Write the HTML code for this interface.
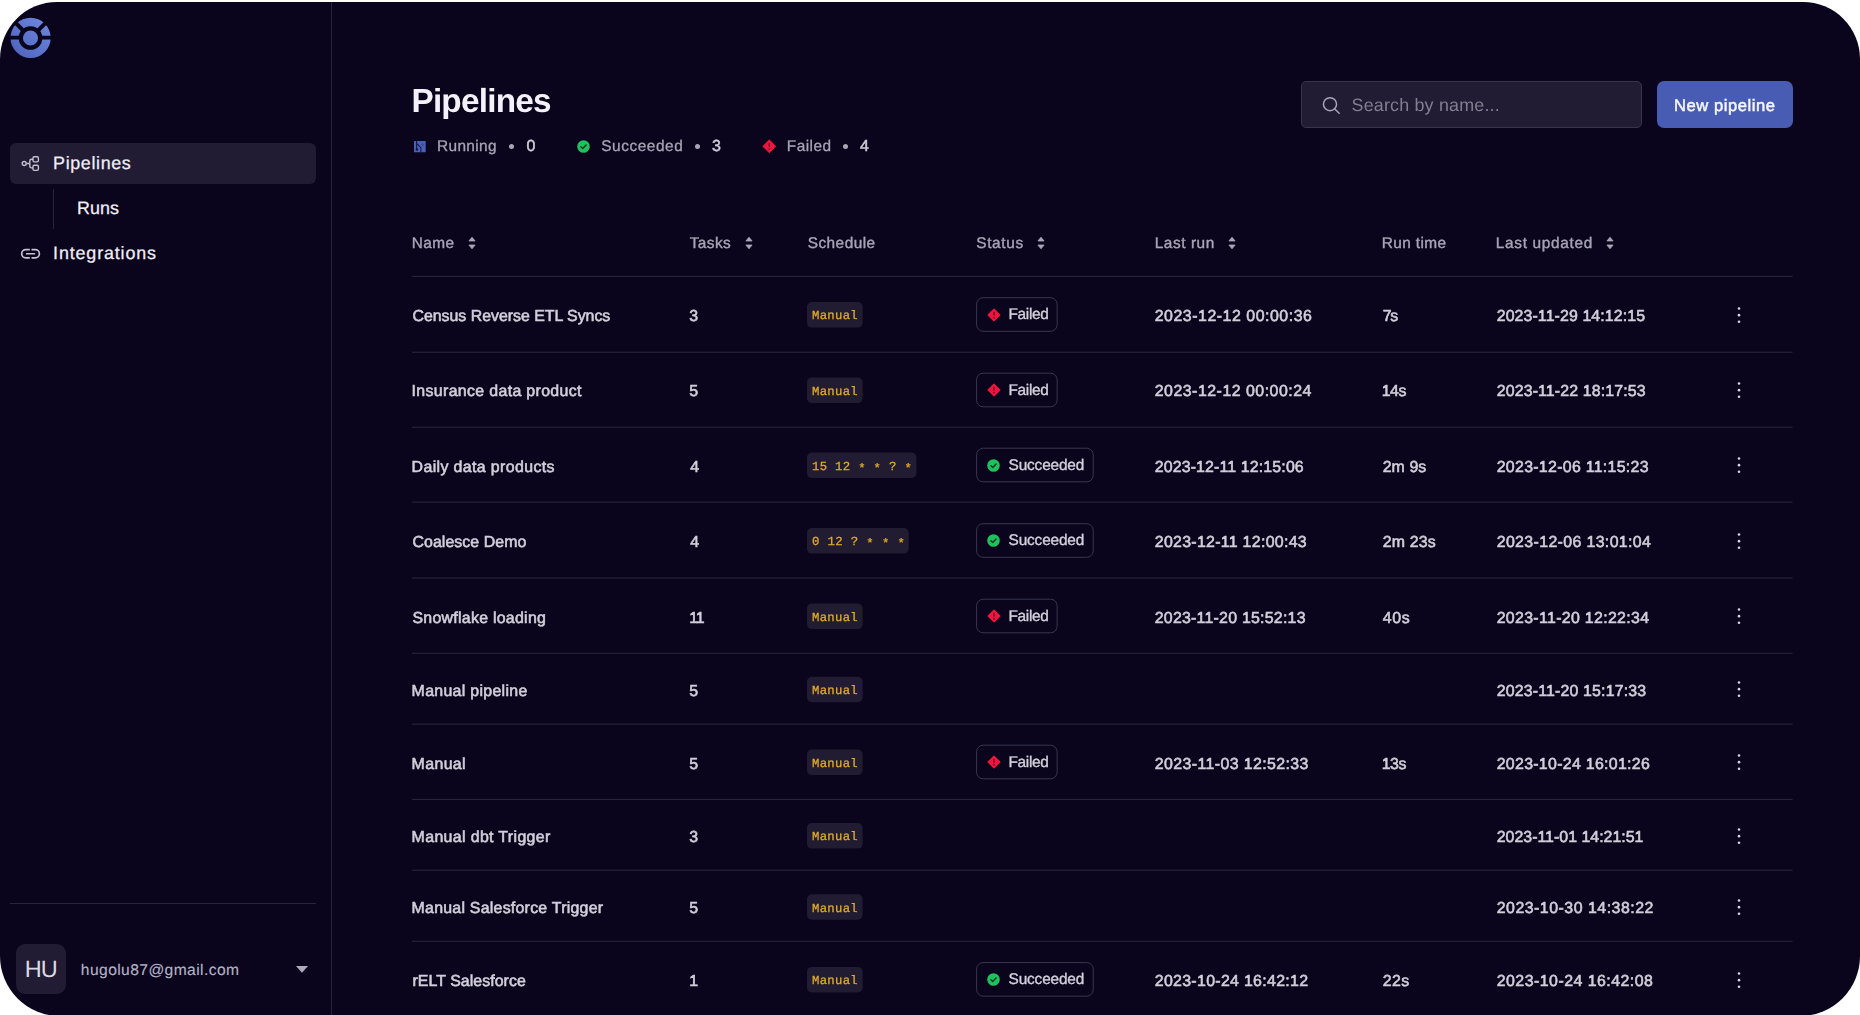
<!DOCTYPE html>
<html lang="en"><head><meta charset="utf-8"><title>Pipelines</title>
<style>
*{box-sizing:border-box;margin:0;padding:0}
html,body{width:1860px;height:1015px;overflow:hidden;background:#fff}
body{font-family:"Liberation Sans",sans-serif;color:#e8e6f0;position:relative;text-rendering:geometricPrecision}
.app{position:absolute;left:0;top:2px;width:1860px;height:1014px;background:#0a051c;border-radius:57px 57px 60px 60px;overflow:hidden}
.abs{position:absolute}
.ic{display:block}
.t{position:absolute;height:30px;line-height:30px;white-space:nowrap}
.chip{position:absolute;left:807px;height:25.6px;border-radius:5px;background:#221c33}
.badge{position:absolute;left:976px;height:34.5px;border:1px solid #37324c;border-radius:7px}
</style></head><body>
<div class="app">
<div class="abs" style="left:0;top:-2px;width:1860px;height:1015px">

<div class="abs" style="left:331px;top:0;width:1px;height:1015px;background:#2a243b"></div>
<svg class="abs" style="left:9px;top:17px" width="44" height="44" viewBox="0 0 44 44">
<defs><linearGradient id="lg" x1="1" y1="0" x2="0" y2="1"><stop offset="0" stop-color="#7189e2"/><stop offset="1" stop-color="#4b61b9"/></linearGradient><clipPath id="cl"><circle cx="21.6" cy="20.9" r="20.7"/></clipPath></defs>
<circle cx="21.6" cy="20.9" r="20.1" fill="url(#lg)"/>
<g clip-path="url(#cl)"><circle cx="21.5" cy="21.0" r="9.7" fill="none" stroke="#0a051c" stroke-width="4.3"/>
<path d="M11.60 20.70 L-1.40 20.70 M31.60 20.70 L44.60 20.70" stroke="#0a051c" stroke-width="3.7" fill="none"/><path d="M14.53 13.83 L5.34 4.64 M28.67 13.83 L37.86 4.64" stroke="#0a051c" stroke-width="4.1" fill="none"/></g>
</svg>
<div class="abs" style="left:10px;top:143px;width:306px;height:40.5px;border-radius:6px;background:#211b33"></div>
<svg class="abs" style="left:21px;top:154px" width="19" height="19" viewBox="0 0 19 19" fill="none" stroke="#c4c1d2" stroke-width="1.4">
<circle cx="3.2" cy="9.5" r="2"/><rect x="12" y="2.8" width="5.4" height="5.1" rx="1.3"/><rect x="12" y="11.3" width="5.4" height="5.1" rx="1.3"/>
<path d="M5.2 9.5 H8 M12 5.3 H10.5 Q8.8 5.3 8.8 7 V12.2 Q8.8 13.9 10.5 13.9 H12"/></svg>
<div class="t" id="nav1" style="left:53.10px;top:148px;font-size:17.9px;color:#f1eff8;letter-spacing:0.630px;-webkit-text-stroke:0.25px #f1eff8;">Pipelines</div>
<div class="abs" style="left:53px;top:188.5px;width:1px;height:40.5px;background:#2a243b"></div>
<div class="t" id="nav2" style="left:77.10px;top:193px;font-size:17.9px;color:#f1eff8;letter-spacing:0.060px;-webkit-text-stroke:0.25px #f1eff8;">Runs</div>
<svg class="abs" style="left:20px;top:248px" width="21" height="12" viewBox="0 0 21 12" fill="none" stroke="#c4c1d2" stroke-width="1.65">
<path d="M9.8 1.6 H5.8 A4.1 4.1 0 0 0 5.8 9.8 H9.8 M11.5 1.6 H15.3 A4.1 4.1 0 0 1 15.3 9.8 H11.5 M6 5.75 H15.1"/></svg>
<div class="t" id="nav3" style="left:53.10px;top:238px;font-size:17.9px;color:#f1eff8;letter-spacing:0.851px;-webkit-text-stroke:0.25px #f1eff8;">Integrations</div>
<div class="abs" style="left:10px;top:903px;width:306px;height:1px;background:#2a243b"></div>
<div class="abs" style="left:16px;top:944px;width:50px;height:50px;border-radius:9px;background:#211b33"></div>
<div class="t" id="hu" style="left:24.72px;top:954px;font-size:23.5px;color:#dbd9e2;letter-spacing:-0.900px;">HU</div>
<div class="t" id="email" style="left:80.86px;top:956px;font-size:15.6px;color:#b4b2c5;letter-spacing:0.418px;-webkit-text-stroke:0.15px #b4b2c5;">hugolu87@gmail.com</div>
<svg class="abs" style="left:296.3px;top:966.3px" width="12" height="7" viewBox="0 0 12 7"><path d="M0 0 H12 L6 6.8 Z" fill="#aeabbd"/></svg>
<div class="abs main" style="left:0;top:0;width:1860px;height:1015px;will-change:transform">
<div class="t" id="title" style="left:411.44px;top:87px;font-size:33.3px;color:#f3f1fa;letter-spacing:-0.771px;font-weight:700;">Pipelines</div>
<svg class="abs" style="left:413.7px;top:140.55px" width="12" height="12" viewBox="0 0 12 12"><rect width="11.7" height="11.35" rx=".7" fill="#4a5fb8"/><path d="M2.6 0 V8 M2.7 2.4 L6.9 6.6 V11.3" stroke="#14183f" stroke-width="1.05" fill="none"/><circle cx="2.9" cy="8.5" r="1.2" fill="#10123a"/><circle cx="8.7" cy="3.7" r=".8" fill="none" stroke="#2e3a85" stroke-width=".7"/></svg>
<div class="t" id="s1" style="left:437.10px;top:132px;font-size:15.4px;color:#a8a5b6;letter-spacing:0.337px;-webkit-text-stroke:0.3px #a8a5b6;">Running</div>
<div class="abs" style="left:509.2px;top:144px;width:5px;height:5px;border-radius:50%;background:#a8a5b6"></div>
<div class="t" id="n1" style="left:526.48px;top:132px;font-size:16px;color:#cfcdd9;letter-spacing:0.000px;-webkit-text-stroke:0.5px #cfcdd9;">0</div>
<div class="abs" style="left:577.25px;top:139.75px"><svg class="ic" width="13" height="13" viewBox="0 0 13 13"><circle cx="6.5" cy="6.5" r="6.3" fill="#1fc05e"/><path d="M3.9 6.8 L5.7 8.5 L9.1 5" fill="none" stroke="#0b3a21" stroke-width="1.5" stroke-linecap="round" stroke-linejoin="round"/></svg></div>
<div class="t" id="s2" style="left:601.27px;top:132px;font-size:15.4px;color:#a8a5b6;letter-spacing:0.562px;-webkit-text-stroke:0.3px #a8a5b6;">Succeeded</div>
<div class="abs" style="left:695px;top:144px;width:5px;height:5px;border-radius:50%;background:#a8a5b6"></div>
<div class="t" id="n2" style="left:712.05px;top:132px;font-size:16px;color:#cfcdd9;letter-spacing:0.000px;-webkit-text-stroke:0.5px #cfcdd9;">3</div>
<div class="abs" style="left:762.1px;top:138.95px"><svg class="ic" width="14.6" height="14.6" viewBox="0 0 14 14"><path d="M7 1.1 L12.9 7 L7 12.9 L1.1 7 Z" fill="#ee1540" stroke="#ee1540" stroke-width="1.1" stroke-linejoin="round"/><rect x="6.35" y="3.7" width="1.3" height="4.1" rx=".65" fill="#6d0a20"/><circle cx="7" cy="9.7" r=".85" fill="#6d0a20"/></svg></div>
<div class="t" id="s3" style="left:786.81px;top:132px;font-size:15.4px;color:#a8a5b6;letter-spacing:0.468px;-webkit-text-stroke:0.3px #a8a5b6;">Failed</div>
<div class="abs" style="left:843px;top:144px;width:5px;height:5px;border-radius:50%;background:#a8a5b6"></div>
<div class="t" id="n3" style="left:859.95px;top:132px;font-size:16px;color:#cfcdd9;letter-spacing:0.000px;-webkit-text-stroke:0.5px #cfcdd9;">4</div>
<div class="abs" style="left:1300.6px;top:80.6px;width:341.5px;height:47.6px;border-radius:5px;background:#211b33;border:1px solid #39344c"></div>
<svg class="abs" style="left:1321.5px;top:95.5px" width="19" height="19" viewBox="0 0 19 19" fill="none" stroke="#a9a6b8" stroke-width="1.45" stroke-linecap="round"><circle cx="8" cy="8.2" r="6.55"/><path d="M12.8 13 L17.2 17.3"/></svg>
<div class="t" id="search" style="left:1351.55px;top:90px;font-size:17.9px;color:#827f90;letter-spacing:0.183px;">Search by name...</div>
<div class="abs" style="left:1657px;top:81px;width:136px;height:46.5px;border-radius:7px;background:#485cb3"></div>
<div class="t" id="btn" style="left:1674.03px;top:91px;font-size:16.6px;color:#f6f6fb;letter-spacing:0.532px;-webkit-text-stroke:0.5px #f6f6fb;">New pipeline</div>
<div class="t" id="h0" style="left:411.81px;top:229px;font-size:15.4px;color:#a7a4b6;letter-spacing:0.405px;-webkit-text-stroke:0.4px #a7a4b6;">Name</div>
<svg class="abs" style="left:468.1px;top:236.05px" width="8" height="14" viewBox="0 0 8 14"><path d="M4 1.2 L7.1 5 H0.9 Z M4 12.8 L0.9 9 H7.1 Z" fill="#aaa7b9" stroke="#aaa7b9" stroke-width=".8" stroke-linejoin="round"/></svg>
<div class="t" id="h1" style="left:689.71px;top:229px;font-size:15.4px;color:#a7a4b6;letter-spacing:0.416px;-webkit-text-stroke:0.4px #a7a4b6;">Tasks</div>
<svg class="abs" style="left:744.85px;top:236.05px" width="8" height="14" viewBox="0 0 8 14"><path d="M4 1.2 L7.1 5 H0.9 Z M4 12.8 L0.9 9 H7.1 Z" fill="#aaa7b9" stroke="#aaa7b9" stroke-width=".8" stroke-linejoin="round"/></svg>
<div class="t" id="h2" style="left:807.71px;top:229px;font-size:15.4px;color:#a7a4b6;letter-spacing:0.463px;-webkit-text-stroke:0.4px #a7a4b6;">Schedule</div>
<div class="t" id="h3" style="left:976.28px;top:229px;font-size:15.4px;color:#a7a4b6;letter-spacing:0.648px;-webkit-text-stroke:0.4px #a7a4b6;">Status</div>
<svg class="abs" style="left:1036.85px;top:236.05px" width="8" height="14" viewBox="0 0 8 14"><path d="M4 1.2 L7.1 5 H0.9 Z M4 12.8 L0.9 9 H7.1 Z" fill="#aaa7b9" stroke="#aaa7b9" stroke-width=".8" stroke-linejoin="round"/></svg>
<div class="t" id="h4" style="left:1154.76px;top:229px;font-size:15.4px;color:#a7a4b6;letter-spacing:0.559px;-webkit-text-stroke:0.4px #a7a4b6;">Last run</div>
<svg class="abs" style="left:1227.6px;top:236.05px" width="8" height="14" viewBox="0 0 8 14"><path d="M4 1.2 L7.1 5 H0.9 Z M4 12.8 L0.9 9 H7.1 Z" fill="#aaa7b9" stroke="#aaa7b9" stroke-width=".8" stroke-linejoin="round"/></svg>
<div class="t" id="h5" style="left:1381.81px;top:229px;font-size:15.4px;color:#a7a4b6;letter-spacing:0.366px;-webkit-text-stroke:0.4px #a7a4b6;">Run time</div>
<div class="t" id="h6" style="left:1495.81px;top:229px;font-size:15.4px;color:#a7a4b6;letter-spacing:0.683px;-webkit-text-stroke:0.4px #a7a4b6;">Last updated</div>
<svg class="abs" style="left:1605.6px;top:236.05px" width="8" height="14" viewBox="0 0 8 14"><path d="M4 1.2 L7.1 5 H0.9 Z M4 12.8 L0.9 9 H7.1 Z" fill="#aaa7b9" stroke="#aaa7b9" stroke-width=".8" stroke-linejoin="round"/></svg>
<svg class="abs" style="left:412px;top:0" width="1381" height="1015" viewBox="0 0 1381 1015" fill="#2d273f"><rect x="0" y="275.90" width="1380.6" height="1"/><rect x="0" y="351.70" width="1380.6" height="1"/><rect x="0" y="426.75" width="1380.6" height="1"/><rect x="0" y="501.60" width="1380.6" height="1"/><rect x="0" y="577.50" width="1380.6" height="1"/><rect x="0" y="652.75" width="1380.6" height="1"/><rect x="0" y="723.60" width="1380.6" height="1"/><rect x="0" y="798.90" width="1380.6" height="1"/><rect x="0" y="869.75" width="1380.6" height="1"/><rect x="0" y="940.75" width="1380.6" height="1"/></svg>
<div class="t" id="r0n" style="left:412.51px;top:302px;font-size:15.9px;color:#d1cfda;letter-spacing:-0.016px;-webkit-text-stroke:0.6px #d1cfda;">Census Reverse ETL Syncs</div>
<div class="t" id="r0t" style="left:689.24px;top:302px;font-size:15.9px;color:#d1cfda;letter-spacing:0.000px;-webkit-text-stroke:0.6px #d1cfda;">3</div>
<svg class="abs" style="left:800px;top:294px" width="130" height="40" viewBox="0 0 130 40"><rect x="6.95" y="8.00" width="55.68" height="25.6" rx="5" fill="#221c33"/></svg>
<div class="t" id="r0c" style="left:812.04px;top:301px;font-size:12.3px;color:#e6ad2b;letter-spacing:0.274px;-webkit-text-stroke:0.25px #e6ad2b;font-family:&quot;Liberation Mono&quot;,&quot;DejaVu Sans Mono&quot;,monospace;">Manual</div>
<svg class="abs" style="left:970px;top:290px" width="135" height="48" viewBox="0 0 135 48"><rect x="6.6" y="7.70" width="80.50" height="33.6" rx="6.5" fill="none" stroke="#3b3650" stroke-width="1"/></svg>
<div class="abs" style="left:986.6px;top:307.85px"><svg class="ic" width="14" height="14" viewBox="0 0 14 14"><path d="M7 1.1 L12.9 7 L7 12.9 L1.1 7 Z" fill="#ee1540" stroke="#ee1540" stroke-width="1.1" stroke-linejoin="round"/><rect x="6.35" y="3.7" width="1.3" height="4.1" rx=".65" fill="#6d0a20"/><circle cx="7" cy="9.7" r=".85" fill="#6d0a20"/></svg></div>
<div class="t" id="r0s" style="left:1008.56px;top:300px;font-size:15.4px;color:#d3d1dc;letter-spacing:-0.342px;-webkit-text-stroke:0.35px #d3d1dc;">Failed</div>
<div class="t" id="r0l" style="left:1154.76px;top:302px;font-size:15.9px;color:#d1cfda;letter-spacing:0.530px;-webkit-text-stroke:0.6px #d1cfda;">2023-12-12 00:00:36</div>
<div class="t" id="r0r" style="left:1382.71px;top:302px;font-size:15.9px;color:#d1cfda;letter-spacing:-1.200px;-webkit-text-stroke:0.6px #d1cfda;">7s</div>
<div class="t" id="r0u" style="left:1496.71px;top:302px;font-size:15.9px;color:#d1cfda;letter-spacing:0.105px;-webkit-text-stroke:0.6px #d1cfda;">2023-11-29 14:12:15</div>
<svg class="abs" style="left:1737.05px;top:306.75px" width="4" height="17" viewBox="0 0 4 17" fill="#d6d4df"><circle cx="2" cy="1.5" r="1.3"/><circle cx="2" cy="8.15" r="1.3"/><circle cx="2" cy="14.8" r="1.3"/></svg>
<div class="t" id="r1n" style="left:411.61px;top:377px;font-size:15.9px;color:#d1cfda;letter-spacing:0.347px;-webkit-text-stroke:0.6px #d1cfda;">Insurance data product</div>
<div class="t" id="r1t" style="left:689.24px;top:377px;font-size:15.9px;color:#d1cfda;letter-spacing:0.000px;-webkit-text-stroke:0.6px #d1cfda;">5</div>
<svg class="abs" style="left:800px;top:370px" width="130" height="40" viewBox="0 0 130 40"><rect x="6.95" y="7.50" width="55.68" height="25.6" rx="5" fill="#221c33"/></svg>
<div class="t" id="r1c" style="left:812.04px;top:377px;font-size:12.3px;color:#e6ad2b;letter-spacing:0.274px;-webkit-text-stroke:0.25px #e6ad2b;font-family:&quot;Liberation Mono&quot;,&quot;DejaVu Sans Mono&quot;,monospace;">Manual</div>
<svg class="abs" style="left:970px;top:366px" width="135" height="48" viewBox="0 0 135 48"><rect x="6.6" y="7.20" width="80.50" height="33.6" rx="6.5" fill="none" stroke="#3b3650" stroke-width="1"/></svg>
<div class="abs" style="left:986.6px;top:383.35px"><svg class="ic" width="14" height="14" viewBox="0 0 14 14"><path d="M7 1.1 L12.9 7 L7 12.9 L1.1 7 Z" fill="#ee1540" stroke="#ee1540" stroke-width="1.1" stroke-linejoin="round"/><rect x="6.35" y="3.7" width="1.3" height="4.1" rx=".65" fill="#6d0a20"/><circle cx="7" cy="9.7" r=".85" fill="#6d0a20"/></svg></div>
<div class="t" id="r1s" style="left:1008.56px;top:376px;font-size:15.4px;color:#d3d1dc;letter-spacing:-0.342px;-webkit-text-stroke:0.35px #d3d1dc;">Failed</div>
<div class="t" id="r1l" style="left:1154.76px;top:377px;font-size:15.9px;color:#d1cfda;letter-spacing:0.505px;-webkit-text-stroke:0.6px #d1cfda;">2023-12-12 00:00:24</div>
<div class="t" id="r1r" style="left:1381.81px;top:377px;font-size:15.9px;color:#d1cfda;letter-spacing:-0.517px;-webkit-text-stroke:0.6px #d1cfda;">14s</div>
<div class="t" id="r1u" style="left:1496.71px;top:377px;font-size:15.9px;color:#d1cfda;letter-spacing:0.143px;-webkit-text-stroke:0.6px #d1cfda;">2023-11-22 18:17:53</div>
<svg class="abs" style="left:1737.05px;top:382.25px" width="4" height="17" viewBox="0 0 4 17" fill="#d6d4df"><circle cx="2" cy="1.5" r="1.3"/><circle cx="2" cy="8.15" r="1.3"/><circle cx="2" cy="14.8" r="1.3"/></svg>
<div class="t" id="r2n" style="left:411.61px;top:453px;font-size:15.9px;color:#d1cfda;letter-spacing:0.380px;-webkit-text-stroke:0.6px #d1cfda;">Daily data products</div>
<div class="t" id="r2t" style="left:690.14px;top:453px;font-size:15.9px;color:#d1cfda;letter-spacing:0.000px;-webkit-text-stroke:0.6px #d1cfda;">4</div>
<svg class="abs" style="left:800px;top:445px" width="130" height="40" viewBox="0 0 130 40"><rect x="6.95" y="7.50" width="109.44" height="25.6" rx="5" fill="#221c33"/></svg>
<div class="t" id="r2c" style="left:812.04px;top:452px;font-size:12.3px;color:#e6ad2b;letter-spacing:0.312px;-webkit-text-stroke:0.25px #e6ad2b;font-family:&quot;Liberation Mono&quot;,&quot;DejaVu Sans Mono&quot;,monospace;">15 12 <span style="position:relative;top:1.6px">*</span> <span style="position:relative;top:1.6px">*</span> ? <span style="position:relative;top:1.6px">*</span></div>
<svg class="abs" style="left:970px;top:441px" width="135" height="48" viewBox="0 0 135 48"><rect x="6.6" y="7.20" width="116.60" height="33.6" rx="6.5" fill="none" stroke="#3b3650" stroke-width="1"/></svg>
<div class="abs" style="left:987.3px;top:458.90px"><svg class="ic" width="13" height="13" viewBox="0 0 13 13"><circle cx="6.5" cy="6.5" r="6.3" fill="#1fc05e"/><path d="M3.9 6.8 L5.7 8.5 L9.1 5" fill="none" stroke="#0b3a21" stroke-width="1.5" stroke-linecap="round" stroke-linejoin="round"/></svg></div>
<div class="t" id="r2s" style="left:1008.56px;top:451px;font-size:15.4px;color:#d3d1dc;letter-spacing:-0.158px;-webkit-text-stroke:0.35px #d3d1dc;">Succeeded</div>
<div class="t" id="r2l" style="left:1154.76px;top:453px;font-size:15.9px;color:#d1cfda;letter-spacing:0.143px;-webkit-text-stroke:0.6px #d1cfda;">2023-12-11 12:15:06</div>
<div class="t" id="r2r" style="left:1382.71px;top:453px;font-size:15.9px;color:#d1cfda;letter-spacing:0.079px;-webkit-text-stroke:0.6px #d1cfda;">2m 9s</div>
<div class="t" id="r2u" style="left:1496.71px;top:453px;font-size:15.9px;color:#d1cfda;letter-spacing:0.305px;-webkit-text-stroke:0.6px #d1cfda;">2023-12-06 11:15:23</div>
<svg class="abs" style="left:1737.05px;top:457.25px" width="4" height="17" viewBox="0 0 4 17" fill="#d6d4df"><circle cx="2" cy="1.5" r="1.3"/><circle cx="2" cy="8.15" r="1.3"/><circle cx="2" cy="14.8" r="1.3"/></svg>
<div class="t" id="r3n" style="left:412.51px;top:528px;font-size:15.9px;color:#d1cfda;letter-spacing:0.064px;-webkit-text-stroke:0.6px #d1cfda;">Coalesce Demo</div>
<div class="t" id="r3t" style="left:690.14px;top:528px;font-size:15.9px;color:#d1cfda;letter-spacing:0.000px;-webkit-text-stroke:0.6px #d1cfda;">4</div>
<svg class="abs" style="left:800px;top:520px" width="130" height="40" viewBox="0 0 130 40"><rect x="6.95" y="8.00" width="101.76" height="25.6" rx="5" fill="#221c33"/></svg>
<div class="t" id="r3c" style="left:812.04px;top:527px;font-size:12.3px;color:#e6ad2b;letter-spacing:0.380px;-webkit-text-stroke:0.25px #e6ad2b;font-family:&quot;Liberation Mono&quot;,&quot;DejaVu Sans Mono&quot;,monospace;">0 12 ? <span style="position:relative;top:1.6px">*</span> <span style="position:relative;top:1.6px">*</span> <span style="position:relative;top:1.6px">*</span></div>
<svg class="abs" style="left:970px;top:516px" width="135" height="48" viewBox="0 0 135 48"><rect x="6.6" y="7.70" width="116.60" height="33.6" rx="6.5" fill="none" stroke="#3b3650" stroke-width="1"/></svg>
<div class="abs" style="left:987.3px;top:534.40px"><svg class="ic" width="13" height="13" viewBox="0 0 13 13"><circle cx="6.5" cy="6.5" r="6.3" fill="#1fc05e"/><path d="M3.9 6.8 L5.7 8.5 L9.1 5" fill="none" stroke="#0b3a21" stroke-width="1.5" stroke-linecap="round" stroke-linejoin="round"/></svg></div>
<div class="t" id="r3s" style="left:1008.56px;top:526px;font-size:15.4px;color:#d3d1dc;letter-spacing:-0.158px;-webkit-text-stroke:0.35px #d3d1dc;">Succeeded</div>
<div class="t" id="r3l" style="left:1154.76px;top:528px;font-size:15.9px;color:#d1cfda;letter-spacing:0.305px;-webkit-text-stroke:0.6px #d1cfda;">2023-12-11 12:00:43</div>
<div class="t" id="r3r" style="left:1382.71px;top:528px;font-size:15.9px;color:#d1cfda;letter-spacing:0.153px;-webkit-text-stroke:0.6px #d1cfda;">2m 23s</div>
<div class="t" id="r3u" style="left:1496.71px;top:528px;font-size:15.9px;color:#d1cfda;letter-spacing:0.368px;-webkit-text-stroke:0.6px #d1cfda;">2023-12-06 13:01:04</div>
<svg class="abs" style="left:1737.05px;top:532.75px" width="4" height="17" viewBox="0 0 4 17" fill="#d6d4df"><circle cx="2" cy="1.5" r="1.3"/><circle cx="2" cy="8.15" r="1.3"/><circle cx="2" cy="14.8" r="1.3"/></svg>
<div class="t" id="r4n" style="left:412.51px;top:604px;font-size:15.9px;color:#d1cfda;letter-spacing:0.273px;-webkit-text-stroke:0.6px #d1cfda;">Snowflake loading</div>
<div class="t" id="r4t" style="left:689.24px;top:604px;font-size:15.9px;color:#d1cfda;letter-spacing:-1.200px;-webkit-text-stroke:0.6px #d1cfda;">11</div>
<svg class="abs" style="left:800px;top:596px" width="130" height="40" viewBox="0 0 130 40"><rect x="6.95" y="7.50" width="55.68" height="25.6" rx="5" fill="#221c33"/></svg>
<div class="t" id="r4c" style="left:812.04px;top:603px;font-size:12.3px;color:#e6ad2b;letter-spacing:0.274px;-webkit-text-stroke:0.25px #e6ad2b;font-family:&quot;Liberation Mono&quot;,&quot;DejaVu Sans Mono&quot;,monospace;">Manual</div>
<svg class="abs" style="left:970px;top:592px" width="135" height="48" viewBox="0 0 135 48"><rect x="6.6" y="7.20" width="80.50" height="33.6" rx="6.5" fill="none" stroke="#3b3650" stroke-width="1"/></svg>
<div class="abs" style="left:986.6px;top:609.35px"><svg class="ic" width="14" height="14" viewBox="0 0 14 14"><path d="M7 1.1 L12.9 7 L7 12.9 L1.1 7 Z" fill="#ee1540" stroke="#ee1540" stroke-width="1.1" stroke-linejoin="round"/><rect x="6.35" y="3.7" width="1.3" height="4.1" rx=".65" fill="#6d0a20"/><circle cx="7" cy="9.7" r=".85" fill="#6d0a20"/></svg></div>
<div class="t" id="r4s" style="left:1008.56px;top:602px;font-size:15.4px;color:#d3d1dc;letter-spacing:-0.342px;-webkit-text-stroke:0.35px #d3d1dc;">Failed</div>
<div class="t" id="r4l" style="left:1154.76px;top:604px;font-size:15.9px;color:#d1cfda;letter-spacing:0.243px;-webkit-text-stroke:0.6px #d1cfda;">2023-11-20 15:52:13</div>
<div class="t" id="r4r" style="left:1382.71px;top:604px;font-size:15.9px;color:#d1cfda;letter-spacing:0.720px;-webkit-text-stroke:0.6px #d1cfda;">40s</div>
<div class="t" id="r4u" style="left:1496.71px;top:604px;font-size:15.9px;color:#d1cfda;letter-spacing:0.330px;-webkit-text-stroke:0.6px #d1cfda;">2023-11-20 12:22:34</div>
<svg class="abs" style="left:1737.05px;top:608.25px" width="4" height="17" viewBox="0 0 4 17" fill="#d6d4df"><circle cx="2" cy="1.5" r="1.3"/><circle cx="2" cy="8.15" r="1.3"/><circle cx="2" cy="14.8" r="1.3"/></svg>
<div class="t" id="r5n" style="left:411.61px;top:677px;font-size:15.9px;color:#d1cfda;letter-spacing:0.312px;-webkit-text-stroke:0.6px #d1cfda;">Manual pipeline</div>
<div class="t" id="r5t" style="left:689.24px;top:677px;font-size:15.9px;color:#d1cfda;letter-spacing:0.000px;-webkit-text-stroke:0.6px #d1cfda;">5</div>
<svg class="abs" style="left:800px;top:669px" width="130" height="40" viewBox="0 0 130 40"><rect x="6.95" y="7.70" width="55.68" height="25.6" rx="5" fill="#221c33"/></svg>
<div class="t" id="r5c" style="left:812.04px;top:676px;font-size:12.3px;color:#e6ad2b;letter-spacing:0.274px;-webkit-text-stroke:0.25px #e6ad2b;font-family:&quot;Liberation Mono&quot;,&quot;DejaVu Sans Mono&quot;,monospace;">Manual</div>
<div class="t" id="r5u" style="left:1496.71px;top:677px;font-size:15.9px;color:#d1cfda;letter-spacing:0.168px;-webkit-text-stroke:0.6px #d1cfda;">2023-11-20 15:17:33</div>
<svg class="abs" style="left:1737.05px;top:681.45px" width="4" height="17" viewBox="0 0 4 17" fill="#d6d4df"><circle cx="2" cy="1.5" r="1.3"/><circle cx="2" cy="8.15" r="1.3"/><circle cx="2" cy="14.8" r="1.3"/></svg>
<div class="t" id="r6n" style="left:411.61px;top:750px;font-size:15.9px;color:#d1cfda;letter-spacing:0.378px;-webkit-text-stroke:0.6px #d1cfda;">Manual</div>
<div class="t" id="r6t" style="left:689.24px;top:750px;font-size:15.9px;color:#d1cfda;letter-spacing:0.000px;-webkit-text-stroke:0.6px #d1cfda;">5</div>
<svg class="abs" style="left:800px;top:742px" width="130" height="40" viewBox="0 0 130 40"><rect x="6.95" y="7.50" width="55.68" height="25.6" rx="5" fill="#221c33"/></svg>
<div class="t" id="r6c" style="left:812.04px;top:749px;font-size:12.3px;color:#e6ad2b;letter-spacing:0.274px;-webkit-text-stroke:0.25px #e6ad2b;font-family:&quot;Liberation Mono&quot;,&quot;DejaVu Sans Mono&quot;,monospace;">Manual</div>
<svg class="abs" style="left:970px;top:738px" width="135" height="48" viewBox="0 0 135 48"><rect x="6.6" y="7.20" width="80.50" height="33.6" rx="6.5" fill="none" stroke="#3b3650" stroke-width="1"/></svg>
<div class="abs" style="left:986.6px;top:755.35px"><svg class="ic" width="14" height="14" viewBox="0 0 14 14"><path d="M7 1.1 L12.9 7 L7 12.9 L1.1 7 Z" fill="#ee1540" stroke="#ee1540" stroke-width="1.1" stroke-linejoin="round"/><rect x="6.35" y="3.7" width="1.3" height="4.1" rx=".65" fill="#6d0a20"/><circle cx="7" cy="9.7" r=".85" fill="#6d0a20"/></svg></div>
<div class="t" id="r6s" style="left:1008.56px;top:748px;font-size:15.4px;color:#d3d1dc;letter-spacing:-0.342px;-webkit-text-stroke:0.35px #d3d1dc;">Failed</div>
<div class="t" id="r6l" style="left:1154.76px;top:750px;font-size:15.9px;color:#d1cfda;letter-spacing:0.405px;-webkit-text-stroke:0.6px #d1cfda;">2023-11-03 12:52:33</div>
<div class="t" id="r6r" style="left:1381.81px;top:750px;font-size:15.9px;color:#d1cfda;letter-spacing:-0.517px;-webkit-text-stroke:0.6px #d1cfda;">13s</div>
<div class="t" id="r6u" style="left:1496.71px;top:750px;font-size:15.9px;color:#d1cfda;letter-spacing:0.305px;-webkit-text-stroke:0.6px #d1cfda;">2023-10-24 16:01:26</div>
<svg class="abs" style="left:1737.05px;top:754.25px" width="4" height="17" viewBox="0 0 4 17" fill="#d6d4df"><circle cx="2" cy="1.5" r="1.3"/><circle cx="2" cy="8.15" r="1.3"/><circle cx="2" cy="14.8" r="1.3"/></svg>
<div class="t" id="r7n" style="left:411.61px;top:823px;font-size:15.9px;color:#d1cfda;letter-spacing:0.363px;-webkit-text-stroke:0.6px #d1cfda;">Manual dbt Trigger</div>
<div class="t" id="r7t" style="left:689.24px;top:823px;font-size:15.9px;color:#d1cfda;letter-spacing:0.000px;-webkit-text-stroke:0.6px #d1cfda;">3</div>
<svg class="abs" style="left:800px;top:815px" width="130" height="40" viewBox="0 0 130 40"><rect x="6.95" y="8.00" width="55.68" height="25.6" rx="5" fill="#221c33"/></svg>
<div class="t" id="r7c" style="left:812.04px;top:822px;font-size:12.3px;color:#e6ad2b;letter-spacing:0.274px;-webkit-text-stroke:0.25px #e6ad2b;font-family:&quot;Liberation Mono&quot;,&quot;DejaVu Sans Mono&quot;,monospace;">Manual</div>
<div class="t" id="r7u" style="left:1496.71px;top:823px;font-size:15.9px;color:#d1cfda;letter-spacing:0.018px;-webkit-text-stroke:0.6px #d1cfda;">2023-11-01 14:21:51</div>
<svg class="abs" style="left:1737.05px;top:827.75px" width="4" height="17" viewBox="0 0 4 17" fill="#d6d4df"><circle cx="2" cy="1.5" r="1.3"/><circle cx="2" cy="8.15" r="1.3"/><circle cx="2" cy="14.8" r="1.3"/></svg>
<div class="t" id="r8n" style="left:411.61px;top:894px;font-size:15.9px;color:#d1cfda;letter-spacing:0.247px;-webkit-text-stroke:0.6px #d1cfda;">Manual Salesforce Trigger</div>
<div class="t" id="r8t" style="left:689.24px;top:894px;font-size:15.9px;color:#d1cfda;letter-spacing:0.000px;-webkit-text-stroke:0.6px #d1cfda;">5</div>
<svg class="abs" style="left:800px;top:886px" width="130" height="40" viewBox="0 0 130 40"><rect x="6.95" y="8.20" width="55.68" height="25.6" rx="5" fill="#221c33"/></svg>
<div class="t" id="r8c" style="left:812.04px;top:894px;font-size:12.3px;color:#e6ad2b;letter-spacing:0.274px;-webkit-text-stroke:0.25px #e6ad2b;font-family:&quot;Liberation Mono&quot;,&quot;DejaVu Sans Mono&quot;,monospace;">Manual</div>
<div class="t" id="r8u" style="left:1496.71px;top:894px;font-size:15.9px;color:#d1cfda;letter-spacing:0.505px;-webkit-text-stroke:0.6px #d1cfda;">2023-10-30 14:38:22</div>
<svg class="abs" style="left:1737.05px;top:898.95px" width="4" height="17" viewBox="0 0 4 17" fill="#d6d4df"><circle cx="2" cy="1.5" r="1.3"/><circle cx="2" cy="8.15" r="1.3"/><circle cx="2" cy="14.8" r="1.3"/></svg>
<div class="t" id="r9n" style="left:412.51px;top:967px;font-size:15.9px;color:#d1cfda;letter-spacing:0.055px;-webkit-text-stroke:0.6px #d1cfda;">rELT Salesforce</div>
<div class="t" id="r9t" style="left:689.24px;top:967px;font-size:15.9px;color:#d1cfda;letter-spacing:0.000px;-webkit-text-stroke:0.6px #d1cfda;">1</div>
<svg class="abs" style="left:800px;top:959px" width="130" height="40" viewBox="0 0 130 40"><rect x="6.95" y="7.90" width="55.68" height="25.6" rx="5" fill="#221c33"/></svg>
<div class="t" id="r9c" style="left:812.04px;top:966px;font-size:12.3px;color:#e6ad2b;letter-spacing:0.274px;-webkit-text-stroke:0.25px #e6ad2b;font-family:&quot;Liberation Mono&quot;,&quot;DejaVu Sans Mono&quot;,monospace;">Manual</div>
<svg class="abs" style="left:970px;top:955px" width="135" height="48" viewBox="0 0 135 48"><rect x="6.6" y="7.60" width="116.60" height="33.6" rx="6.5" fill="none" stroke="#3b3650" stroke-width="1"/></svg>
<div class="abs" style="left:987.3px;top:973.30px"><svg class="ic" width="13" height="13" viewBox="0 0 13 13"><circle cx="6.5" cy="6.5" r="6.3" fill="#1fc05e"/><path d="M3.9 6.8 L5.7 8.5 L9.1 5" fill="none" stroke="#0b3a21" stroke-width="1.5" stroke-linecap="round" stroke-linejoin="round"/></svg></div>
<div class="t" id="r9s" style="left:1008.56px;top:965px;font-size:15.4px;color:#d3d1dc;letter-spacing:-0.158px;-webkit-text-stroke:0.35px #d3d1dc;">Succeeded</div>
<div class="t" id="r9l" style="left:1154.76px;top:967px;font-size:15.9px;color:#d1cfda;letter-spacing:0.318px;-webkit-text-stroke:0.6px #d1cfda;">2023-10-24 16:42:12</div>
<div class="t" id="r9r" style="left:1382.71px;top:967px;font-size:15.9px;color:#d1cfda;letter-spacing:0.383px;-webkit-text-stroke:0.6px #d1cfda;">22s</div>
<div class="t" id="r9u" style="left:1496.71px;top:967px;font-size:15.9px;color:#d1cfda;letter-spacing:0.480px;-webkit-text-stroke:0.6px #d1cfda;">2023-10-24 16:42:08</div>
<svg class="abs" style="left:1737.05px;top:971.65px" width="4" height="17" viewBox="0 0 4 17" fill="#d6d4df"><circle cx="2" cy="1.5" r="1.3"/><circle cx="2" cy="8.15" r="1.3"/><circle cx="2" cy="14.8" r="1.3"/></svg>
</div></div></div></body></html>
